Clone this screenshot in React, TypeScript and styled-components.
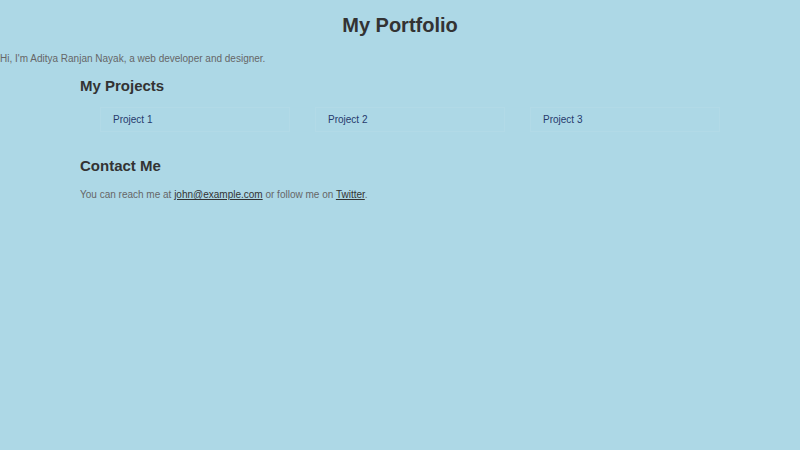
import React from 'react';
import styled, { createGlobalStyle } from 'styled-components';

const GlobalStyle = createGlobalStyle`
  html, body {
    margin: 0;
    padding: 0;
    background: #add8e6;
    font-family: "Liberation Sans", Arial, sans-serif;
    font-size: 10px;
    color: #666;
  }
`;

const Page = styled.div`
  min-height: 450px;
  background: #add8e6;
`;

const Title = styled.h1`
  margin: 0;
  padding-top: 14px;
  font-size: 20px;
  line-height: 23px;
  font-weight: bold;
  color: #333;
  text-align: center;
`;

const Intro = styled.p`
  margin: 16px 0 0;
  font-size: 10px;
  line-height: 11.5px;
  color: #666;
`;

const Section = styled.section<{ $gap: number }>`
  margin: 0 10%;
  padding-top: ${(p) => p.$gap}px;
`;

const Heading = styled.h2`
  margin: 0;
  font-size: 15px;
  line-height: 17px;
  font-weight: bold;
  color: #333;
`;

const ProjectList = styled.ul`
  list-style: none;
  margin: 13px 0 0;
  padding: 0 0 0 20px;
  display: grid;
  grid-template-columns: repeat(3, 1fr);
  gap: 25px;
`;

const ProjectCard = styled.li`
  padding: 6px 12px;
  border: 1px solid rgba(255, 255, 255, 0.07);
  font-size: 10px;
  line-height: 11.5px;
  color: #263a6c;
`;

const ContactText = styled.p`
  margin: 15px 0 0;
  font-size: 10px;
  line-height: 11.5px;
  color: #666;

  a {
    color: #333;
    text-decoration: underline;
  }
`;

const projects = ['Project 1', 'Project 2', 'Project 3'];

export default function App() {
  return (
    <Page>
      <GlobalStyle />
      <Title>My Portfolio</Title>
      <Intro>Hi, I'm Aditya Ranjan Nayak, a web developer and designer.</Intro>

      <Section $gap={12}>
        <Heading>My Projects</Heading>
        <ProjectList>
          {projects.map((name) => (
            <ProjectCard key={name}>{name}</ProjectCard>
          ))}
        </ProjectList>
      </Section>

      <Section $gap={25}>
        <Heading>Contact Me</Heading>
        <ContactText>
          You can reach me at <a href="#">john@example.com</a> or follow me on{' '}
          <a href="#">Twitter</a>.
        </ContactText>
      </Section>
    </Page>
  );
}
